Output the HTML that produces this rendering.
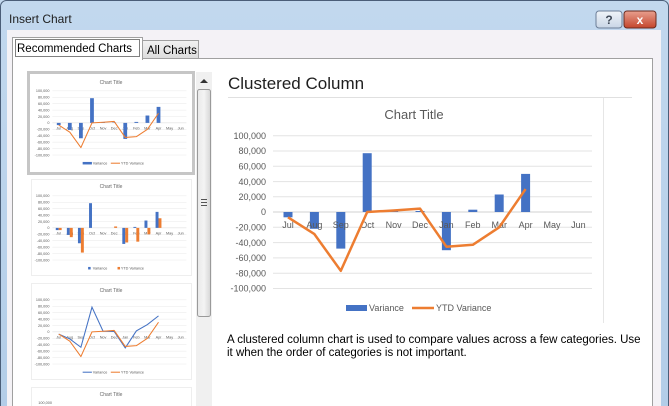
<!DOCTYPE html>
<html><head><meta charset="utf-8"><style>
html,body{margin:0;padding:0;width:669px;height:406px;overflow:hidden;background:#bcd3ea;font-family:"Liberation Sans",sans-serif}
</style></head><body>
<svg width="669" height="406" xmlns="http://www.w3.org/2000/svg" style="position:absolute;left:0;top:0" font-family="Liberation Sans, sans-serif">
<defs>
<linearGradient id="tb" x1="0" y1="0" x2="0" y2="1"><stop offset="0" stop-color="#c2d8ee"/><stop offset="1" stop-color="#b3cde8"/></linearGradient>
<linearGradient id="cl" x1="0" y1="0" x2="0" y2="1"><stop offset="0" stop-color="#e8a08f"/><stop offset="1" stop-color="#c4452c"/></linearGradient>
<linearGradient id="hp" x1="0" y1="0" x2="0" y2="1"><stop offset="0" stop-color="#f0f4f9"/><stop offset="1" stop-color="#c9d6e6"/></linearGradient>
<linearGradient id="tab2" x1="0" y1="0" x2="0" y2="1"><stop offset="0" stop-color="#f2f2f2"/><stop offset="1" stop-color="#dcdcdc"/></linearGradient>
<linearGradient id="sb" x1="0" y1="0" x2="1" y2="0"><stop offset="0" stop-color="#e8e8e8"/><stop offset="0.5" stop-color="#f4f4f4"/><stop offset="1" stop-color="#d6d6d6"/></linearGradient>
<g id="grid" stroke="#e3e3e3" stroke-width="1">
<line x1="273" y1="135.7" x2="592" y2="135.7"/><line x1="273" y1="151" x2="592" y2="151"/><line x1="273" y1="166.3" x2="592" y2="166.3"/><line x1="273" y1="181.6" x2="592" y2="181.6"/><line x1="273" y1="196.7" x2="592" y2="196.7"/><line x1="273" y1="212" x2="592" y2="212" stroke="#d0d0d0"/><line x1="273" y1="227.3" x2="592" y2="227.3"/><line x1="273" y1="242.6" x2="592" y2="242.6"/><line x1="273" y1="257.9" x2="592" y2="257.9"/><line x1="273" y1="273.2" x2="592" y2="273.2"/><line x1="273" y1="288.5" x2="592" y2="288.5"/>
</g>
<g id="ylab" font-size="9" fill="#595959" text-anchor="end">
<text x="266" y="139">100,000</text><text x="266" y="154">80,000</text><text x="266" y="169.5">60,000</text><text x="266" y="185">40,000</text><text x="266" y="200">20,000</text><text x="266" y="215">0</text><text x="266" y="230.5">-20,000</text><text x="266" y="246">-40,000</text><text x="266" y="261">-60,000</text><text x="266" y="276.5">-80,000</text><text x="266" y="291.5">-100,000</text>
</g>
<g id="xlab" font-size="9" fill="#595959" text-anchor="middle">
<text x="288" y="228">Jul</text><text x="314.4" y="228">Aug</text><text x="340.8" y="228">Sep</text><text x="367.2" y="228">Oct</text><text x="393.6" y="228">Nov</text><text x="420" y="228">Dec</text><text x="446.4" y="228">Jan</text><text x="472.8" y="228">Feb</text><text x="499.2" y="228">Mar</text><text x="525.6" y="228">Apr</text><text x="552" y="228">May</text><text x="578.4" y="228">Jun</text>
</g>
<g id="leg" font-size="9" fill="#595959"><text x="369" y="311">Variance</text><text x="436" y="311">YTD Variance</text></g>
<g id="bars" fill="#4472c4">
<rect x="283.5" y="212" width="9" height="5.3"/><rect x="309.9" y="212" width="9" height="16.8"/><rect x="336.3" y="212" width="9" height="36.6"/><rect x="362.7" y="153.2" width="9" height="58.8"/><rect x="389.1" y="210.5" width="9" height="1.5"/><rect x="415.5" y="211" width="9" height="1"/><rect x="441.9" y="212" width="9" height="38.2"/><rect x="468.3" y="209.7" width="9" height="2.3"/><rect x="494.7" y="194.5" width="9" height="17.5"/><rect x="521.1" y="173.9" width="9" height="38.1"/>
</g>
<polyline id="ytd" fill="none" stroke="#ed7d31" stroke-width="2.5" stroke-linejoin="round" points="288,217.3 314.4,234.1 340.8,270.8 367.2,212 393.6,210.5 420,208.6 446.4,246.7 472.8,244.8 499.2,227.3 525.6,189.1"/>
<polyline id="varline" fill="none" stroke="#4472c4" stroke-width="2.5" points="288,217.3 314.4,228.8 340.8,248.6 367.2,153.2 393.6,210.5 420,211 446.4,250.2 472.8,209.7 499.2,194.5 525.6,173.9"/>
<g id="cbars">
<g fill="#4472c4"><rect x="281" y="212" width="7" height="5.3"/><rect x="307.4" y="212" width="7" height="16.8"/><rect x="333.8" y="212" width="7" height="36.6"/><rect x="360.2" y="153.2" width="7" height="58.8"/><rect x="439.4" y="212" width="7" height="38.2"/><rect x="465.8" y="209.7" width="7" height="2.3"/><rect x="492.2" y="194.5" width="7" height="17.5"/><rect x="518.6" y="173.9" width="7" height="38.1"/></g>
<g fill="#ed7d31"><rect x="288" y="212" width="7" height="5.3"/><rect x="314.4" y="212" width="7" height="22.1"/><rect x="340.8" y="212" width="7" height="58.8"/><rect x="420" y="208.6" width="7" height="3.4"/><rect x="446.4" y="212" width="7" height="34.7"/><rect x="472.8" y="212" width="7" height="32.8"/><rect x="499.2" y="212" width="7" height="15.3"/><rect x="525.6" y="189.1" width="7" height="22.9"/></g>
</g>
</defs>
<rect x="0" y="0" width="669" height="406" fill="url(#tb)"/>
<rect x="0.5" y="0.5" width="668" height="420" rx="6" fill="none" stroke="#4b5e78"/>
<text x="9" y="23" font-size="12" fill="#1e1e1e">Insert Chart</text>
<rect x="596" y="11" width="26" height="17" rx="3" fill="url(#hp)" stroke="#6d7f98"/>
<text x="609" y="24" font-size="12" fill="#404a58" text-anchor="middle" font-weight="bold">?</text>
<rect x="624" y="11" width="32" height="17" rx="3" fill="url(#cl)" stroke="#6a2a1e"/>
<text x="640" y="24" font-size="12" fill="#fff" text-anchor="middle" font-weight="bold">x</text>
<rect x="7" y="30" width="654" height="380" fill="#f4f2f6"/>
<rect x="12.5" y="58.5" width="640" height="360" fill="#fff" stroke="#a0a0a0"/>
<rect x="142.5" y="40.5" width="56" height="18" fill="url(#tab2)" stroke="#a0a0a0"/>
<text x="147" y="54" font-size="11.5" fill="#000">All Charts</text>
<rect x="12.5" y="37.5" width="130" height="22" fill="#fff" stroke="#a0a0a0"/>
<rect x="13" y="59" width="129" height="2" fill="#fff"/>
<rect x="15.5" y="39.5" width="124" height="17" fill="none" stroke="#000" stroke-dasharray="1,1"/>
<text x="17" y="52" font-size="11.5" fill="#000">Recommended Charts</text>
<rect x="196" y="72" width="16" height="334" fill="#f0f0f0"/>
<path d="M200 83 L204 79 L208 83 Z" fill="#333"/>
<rect x="197.5" y="89.5" width="13" height="227" rx="2" fill="url(#sb)" stroke="#9a9a9a"/>
<g stroke="#555"><line x1="201" y1="199.5" x2="207" y2="199.5"/><line x1="201" y1="202.5" x2="207" y2="202.5"/><line x1="201" y1="205.5" x2="207" y2="205.5"/></g>
<!-- thumb 1 -->
<rect x="28.5" y="72.5" width="165" height="101" fill="#fff" stroke="#c6c6c6" stroke-width="3"/>
<g transform="translate(31,75) scale(0.42) translate(-222,-98)"><use href="#grid"/><use href="#ylab"/><use href="#xlab"/><use href="#bars"/><use href="#ytd"/><use href="#leg"/>
<rect x="345" y="305" width="22" height="6" fill="#4472c4"/><line x1="412" y1="308" x2="434" y2="308" stroke="#ed7d31" stroke-width="2.5"/></g>
<text x="111" y="84" font-size="5" fill="#666" text-anchor="middle">Chart Title</text>
<!-- thumb 2 -->
<rect x="31.5" y="179.5" width="160" height="96" fill="#fff" stroke="#eee"/>
<g transform="translate(31,180) scale(0.42) translate(-222,-98)"><use href="#grid"/><use href="#ylab"/><use href="#xlab"/><use href="#cbars"/><use href="#leg"/>
<rect x="358" y="305" width="6" height="6" fill="#4472c4"/><rect x="428" y="305" width="6" height="6" fill="#ed7d31"/></g>
<text x="111" y="188" font-size="5" fill="#666" text-anchor="middle">Chart Title</text>
<!-- thumb 3 -->
<rect x="31.5" y="283.5" width="160" height="96" fill="#fff" stroke="#eee"/>
<g transform="translate(31,284) scale(0.42) translate(-222,-98)"><use href="#grid"/><use href="#ylab"/><use href="#xlab"/><use href="#varline"/><use href="#ytd"/><use href="#leg"/>
<line x1="345" y1="308" x2="367" y2="308" stroke="#4472c4" stroke-width="2.5"/><line x1="412" y1="308" x2="434" y2="308" stroke="#ed7d31" stroke-width="2.5"/></g>
<text x="111" y="292" font-size="5" fill="#666" text-anchor="middle">Chart Title</text>
<!-- thumb 4 -->
<rect x="31.5" y="387.5" width="160" height="30" fill="#fff" stroke="#eee"/>
<text x="111" y="396" font-size="5" fill="#666" text-anchor="middle">Chart Title</text>
<text x="52" y="404" font-size="3.8" fill="#595959" text-anchor="end">100,000</text>
<!-- right -->
<text x="228" y="89" font-size="17" fill="#1e1e1e">Clustered Column</text>
<line x1="228" y1="97.5" x2="632" y2="97.5" stroke="#e0e0e0"/>
<line x1="603.5" y1="98" x2="603.5" y2="323" stroke="#e6e6e6"/>
<text x="414" y="119" font-size="13" fill="#595959" text-anchor="middle">Chart Title</text>
<use href="#grid"/>
<use href="#ylab"/>
<use href="#bars"/>
<use href="#xlab"/>
<use href="#ytd"/>
<rect x="346" y="305" width="21" height="6" fill="#4472c4"/>
<line x1="412" y1="308" x2="434" y2="308" stroke="#ed7d31" stroke-width="2.5"/>
<use href="#leg"/>
<text x="227" y="343" font-size="11.5" fill="#000">A clustered column chart is used to compare values across a few categories. Use</text>
<text x="227" y="356" font-size="11.5" fill="#000">it when the order of categories is not important.</text>
</svg>
</body></html>
